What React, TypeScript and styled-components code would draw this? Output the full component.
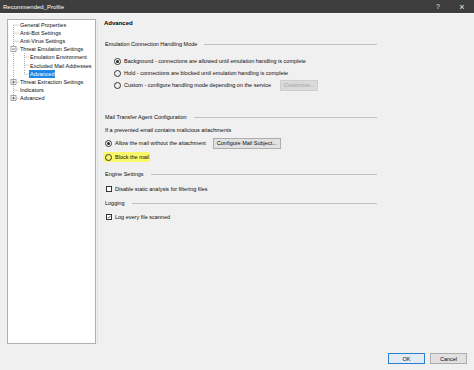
import React from 'react';
import styled, { createGlobalStyle } from 'styled-components';

const GlobalStyle = createGlobalStyle`
  html, body {
    margin: 0;
    padding: 0;
    background: #f0f0f0;
  }
  body {
    font-family: "Liberation Sans", Arial, sans-serif;
    font-size: 5.5px;
    color: #0d0d0d;
  }
`;

const Window = styled.div`
  width: 474px;
  height: 370px;
  display: flex;
  flex-direction: column;
  background: #f0f0f0;
  overflow: hidden;
`;

const TitleBar = styled.div`
  height: 13px;
  background: #3e3e3e;
  border-bottom: 1px solid #fafafa;
  display: flex;
  align-items: center;
  padding-left: 3px;
  color: #ffffff;
  font-size: 6px;
`;

const Title = styled.div`
  flex: 1;
`;

const TitleButton = styled.div<{ $size: number }>`
  width: 24px;
  text-align: center;
  font-size: ${p => p.$size}px;
  color: #e8e8e8;
`;

const Main = styled.div`
  display: flex;
  padding: 5px 0 0 7px;
  height: 325px;
`;

const Tree = styled.div`
  width: 89px;
  height: 325px;
  box-sizing: border-box;
  background: #ffffff;
  border: 1px solid #b0b0b0;
  padding-top: 0.5px;
`;

const TreeRow = styled.div`
  height: 8.2px;
  display: flex;
  align-items: center;
  white-space: nowrap;
`;

const TreeLabel = styled.span<{ $selected?: boolean }>`
  line-height: 8px;
  padding: 0 1px;
  background: ${p => (p.$selected ? '#1c87e5' : 'transparent')};
  color: ${p => (p.$selected ? '#ffffff' : '#0d0d0d')};
`;

const Content = styled.div`
  flex: 1;
  margin-left: 1px;
  border-left: 1px solid #e2e2e2;
  padding-left: 6px;
  display: flex;
  flex-direction: column;
`;

const PageHeader = styled.div`
  height: 8px;
  line-height: 8px;
  font-weight: bold;
  font-size: 6px;
  color: #000;
`;

const GroupTitle = styled.div<{ $top: number }>`
  margin-top: ${p => p.$top}px;
  width: 272px;
  height: 8px;
  padding-left: 1px;
  display: flex;
  align-items: center;
  white-space: nowrap;
`;

const GroupLine = styled.div`
  flex: 1;
  height: 1px;
  background: #c2c2c2;
  margin-left: 7px;
`;

const OptionList = styled.div<{ $indent: number; $top: number }>`
  margin-left: ${p => p.$indent}px;
  margin-top: ${p => p.$top}px;
  display: flex;
  flex-direction: column;
`;

const OptionRow = styled.div<{ $height: number }>`
  height: ${p => p.$height}px;
  display: flex;
  align-items: center;
  white-space: nowrap;
`;

const Radio = styled.span<{ $checked?: boolean }>`
  width: 7px;
  height: 7px;
  box-sizing: border-box;
  border: 1px solid #333;
  border-radius: 50%;
  background: ${p => (p.$checked ? '#fff' : 'transparent')};
  display: flex;
  align-items: center;
  justify-content: center;
  flex-shrink: 0;

  &::after {
    content: '';
    width: 3px;
    height: 3px;
    border-radius: 50%;
    background: ${p => (p.$checked ? '#222' : 'transparent')};
  }
`;

const CheckBox = styled.span`
  width: 6px;
  height: 6px;
  box-sizing: border-box;
  border: 1px solid #333;
  background: #fff;
  margin-left: 2px;
  display: flex;
  flex-shrink: 0;
`;

const OptionText = styled.span<{ $gap: number }>`
  margin-left: ${p => p.$gap}px;
`;

const Highlight = styled.span`
  display: inline-flex;
  align-items: center;
  height: 10px;
  margin-left: -2px;
  padding: 0 1px 0 2px;
  background: #f8f86a;
`;

const Plain = styled.div<{ $top: number }>`
  margin-top: ${p => p.$top}px;
  height: 8px;
  line-height: 8px;
  padding-left: 1px;
`;

const Button = styled.div<{ $width: number; $variant?: 'default' | 'primary' | 'disabled'; $gap?: number }>`
  width: ${p => p.$width}px;
  height: 11px;
  box-sizing: border-box;
  margin-left: ${p => p.$gap ?? 0}px;
  display: flex;
  align-items: center;
  justify-content: center;
  border: 1px solid
    ${p => (p.$variant === 'primary' ? '#2b7fd0' : p.$variant === 'disabled' ? '#cfcfcf' : '#adadad')};
  background: ${p => (p.$variant === 'primary' ? '#e3ecf5' : p.$variant === 'disabled' ? '#dadada' : '#e1e1e1')};
  color: ${p => (p.$variant === 'disabled' ? '#a3a3a3' : '#0d0d0d')};
  white-space: nowrap;
`;

const Footer = styled.div`
  display: flex;
  justify-content: flex-end;
  gap: 5px;
  padding: 9px 7px 0 0;
`;

type TreeItem = {
  label: string;
  level: 0 | 1;
  expander?: 'plus' | 'minus';
  selected?: boolean;
  first?: boolean;
  last?: boolean;
};

const treeItems: TreeItem[] = [
  { label: 'General Properties', level: 0, first: true },
  { label: 'Anti-Bot Settings', level: 0 },
  { label: 'Anti-Virus Settings', level: 0 },
  { label: 'Threat Emulation Settings', level: 0, expander: 'minus' },
  { label: 'Emulation Environment', level: 1 },
  { label: 'Excluded Mail Addresses', level: 1 },
  { label: 'Advanced', level: 1, selected: true, last: true },
  { label: 'Threat Extraction Settings', level: 0, expander: 'plus' },
  { label: 'Indicators', level: 0 },
  { label: 'Advanced', level: 0, expander: 'plus', last: true },
];

const H = 8.2;
const MID = 4.1;
const dot = { stroke: '#ababab', strokeWidth: 1, strokeDasharray: '1 1' };

function Connector({ item }: { item: TreeItem }) {
  const w = item.level === 0 ? 11 : 21;
  return (
    <svg width={w} height={H} viewBox={`0 0 ${w} ${H}`} style={{ flexShrink: 0 }}>
      {item.level === 0 ? (
        <>
          <line x1={5.5} y1={item.first ? MID : 0} x2={5.5} y2={item.last ? MID : H} {...dot} />
          <line x1={5.5} y1={MID} x2={11} y2={MID} {...dot} />
          {item.expander && (
            <>
              <rect x={3} y={MID - 2.5} width={5} height={5} fill="#fff" stroke="#8f8f8f" strokeWidth={0.8} />
              <line x1={4} y1={MID} x2={7} y2={MID} stroke="#444" strokeWidth={0.7} />
              {item.expander === 'plus' && (
                <line x1={5.5} y1={MID - 1.5} x2={5.5} y2={MID + 1.5} stroke="#444" strokeWidth={0.7} />
              )}
            </>
          )}
        </>
      ) : (
        <>
          <line x1={5.5} y1={0} x2={5.5} y2={H} {...dot} />
          <line x1={16.5} y1={0} x2={16.5} y2={item.last ? MID : H} {...dot} />
          <line x1={16.5} y1={MID} x2={21} y2={MID} {...dot} />
        </>
      )}
    </svg>
  );
}

function CheckMark() {
  return (
    <svg width={4} height={4} viewBox="0 0 4 4">
      <polyline points="0.5,2 1.6,3.1 3.6,0.8" fill="none" stroke="#222" strokeWidth={0.7} />
    </svg>
  );
}

export default function App() {
  return (
    <>
      <GlobalStyle />
      <Window>
        <TitleBar>
          <Title>Recommended_Profile</Title>
          <TitleButton $size={7}>?</TitleButton>
          <TitleButton $size={9}>×</TitleButton>
        </TitleBar>

        <Main>
          <Tree>
            {treeItems.map((item, i) => (
              <TreeRow key={i}>
                <Connector item={item} />
                <TreeLabel $selected={item.selected}>{item.label}</TreeLabel>
              </TreeRow>
            ))}
          </Tree>

          <Content>
            <PageHeader>Advanced</PageHeader>

            <GroupTitle $top={13}>
              Emulation Connection Handling Mode
              <GroupLine />
            </GroupTitle>
            <OptionList $indent={10} $top={7}>
              <OptionRow $height={12}>
                <Radio $checked />
                <OptionText $gap={3}>Background - connections are allowed until emulation handling is complete</OptionText>
              </OptionRow>
              <OptionRow $height={12}>
                <Radio />
                <OptionText $gap={3}>Hold - connections are blocked until emulation handling is complete</OptionText>
              </OptionRow>
              <OptionRow $height={12}>
                <Radio />
                <OptionText $gap={3}>Custom - configure handling mode depending on the service</OptionText>
                <Button $width={38} $variant="disabled" $gap={9}>Customize...</Button>
              </OptionRow>
            </OptionList>

            <GroupTitle $top={22}>
              Mail Transfer Agent Configuration
              <GroupLine />
            </GroupTitle>
            <Plain $top={5}>If a prevented email contains malicious attachments</Plain>
            <OptionList $indent={1} $top={2}>
              <OptionRow $height={14}>
                <Radio $checked />
                <OptionText $gap={3}>Allow the mail without the attachment</OptionText>
                <Button $width={68} $gap={7}>Configure Mail Subject...</Button>
              </OptionRow>
              <OptionRow $height={14}>
                <Highlight>
                  <Radio />
                  <OptionText $gap={3}>Block the mail</OptionText>
                </Highlight>
              </OptionRow>
            </OptionList>

            <GroupTitle $top={6}>
              Engine Settings
              <GroupLine />
            </GroupTitle>
            <OptionList $indent={0} $top={5}>
              <OptionRow $height={12}>
                <CheckBox />
                <OptionText $gap={3}>Disable static analysis for filtering files</OptionText>
              </OptionRow>
            </OptionList>

            <GroupTitle $top={4}>
              Logging
              <GroupLine />
            </GroupTitle>
            <OptionList $indent={0} $top={4}>
              <OptionRow $height={12}>
                <CheckBox>
                  <CheckMark />
                </CheckBox>
                <OptionText $gap={3}>Log every file scanned</OptionText>
              </OptionRow>
            </OptionList>
          </Content>
        </Main>

        <Footer>
          <Button $width={37} $variant="primary">OK</Button>
          <Button $width={37}>Cancel</Button>
        </Footer>
      </Window>
    </>
  );
}
